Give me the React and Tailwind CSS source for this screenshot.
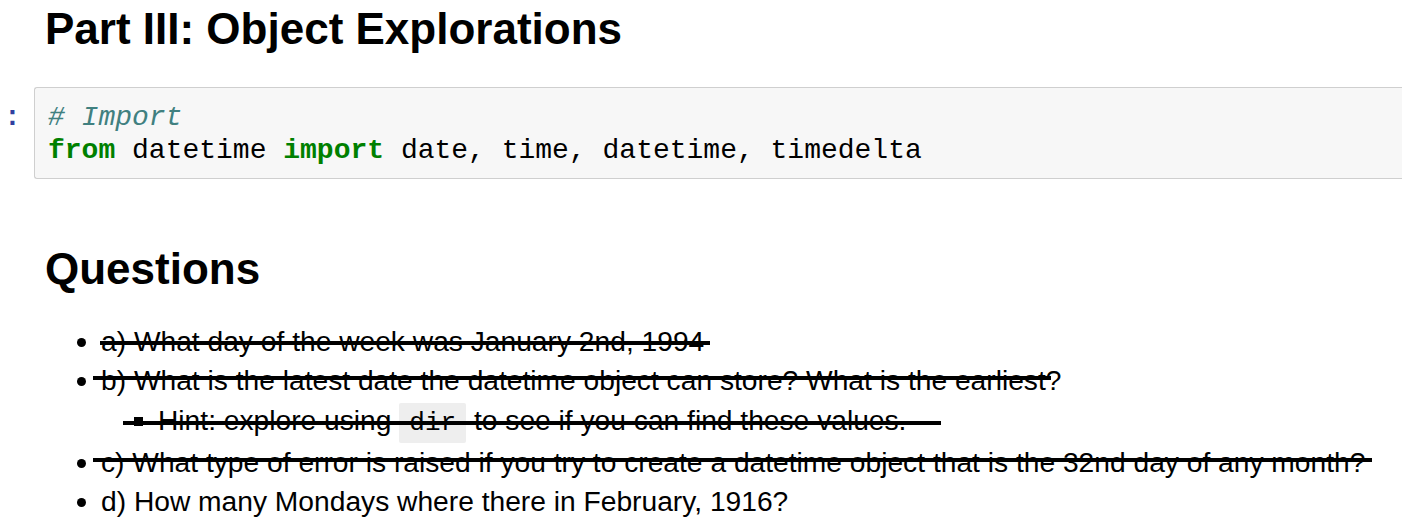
function Strike({ className }) {
  return <span className={`pointer-events-none absolute h-[4px] bg-black ${className}`} />;
}

export default function App() {
  return (
    <div className="min-h-[526px] w-[1402px] overflow-hidden bg-white text-black font-['Liberation_Sans',Arial,sans-serif]">
      <h1 className="pl-[45px] pt-[4px] text-[44px] font-bold leading-[50px]">
        Part III: Object Explorations
      </h1>

      <div className="mt-[33px] flex">
        <div className="w-[34px] shrink-0 pl-[4px] pt-[14px] font-['Liberation_Mono',monospace] text-[28px] font-bold leading-[33px] text-[#303f9f]">
          :
        </div>
        <div className="flex-1 rounded-l-[3px] border border-r-0 border-[#cfcfcf] bg-[#f7f7f7] pb-[11px] pl-[13px] pt-[13px] font-['Liberation_Mono',monospace] text-[28px] leading-[33px]">
          <div className="italic text-[#408080]"># Import</div>
          <div className="whitespace-pre">
            <span className="font-bold text-[#008000]">from</span> datetime{" "}
            <span className="font-bold text-[#008000]">import</span> date, time, datetime, timedelta
          </div>
        </div>
      </div>

      <h2 className="mt-[65px] pl-[45px] text-[44px] font-bold leading-[50px]">Questions</h2>

      <ul className="mt-[28px] list-disc pl-[101px] text-[28.2px] leading-[39.3px]">
        <li className="relative">
          a) What day of the week was January 2nd, 1994
          <Strike className="left-[-1px] top-[19px] w-[610px]" />
        </li>
        <li className="relative">
          b) What is the latest date the datetime object can store? What is the earliest?
          <Strike className="left-[-8px] top-[15px] w-[958px]" />
          <ul className="list-[square] pl-[57px]">
            <li className="relative">
              Hint: explore using{" "}
              <code className="rounded-[2px] bg-[#eeeeee] px-[10px] py-[5px] font-['Liberation_Mono',monospace] text-[26px]">dir</code>{" "}
              to see if you can find these values.
              <Strike className="left-[-35px] top-[20px] w-[818px]" />
            </li>
          </ul>
        </li>
        <li className="relative">
          c) What type of error is raised if you try to create a datetime object that is the 32nd day of any month?
          <Strike className="left-[-8px] top-[15px] w-[1279px]" />
        </li>
        <li>d) How many Mondays where there in February, 1916?</li>
      </ul>
    </div>
  );
}
